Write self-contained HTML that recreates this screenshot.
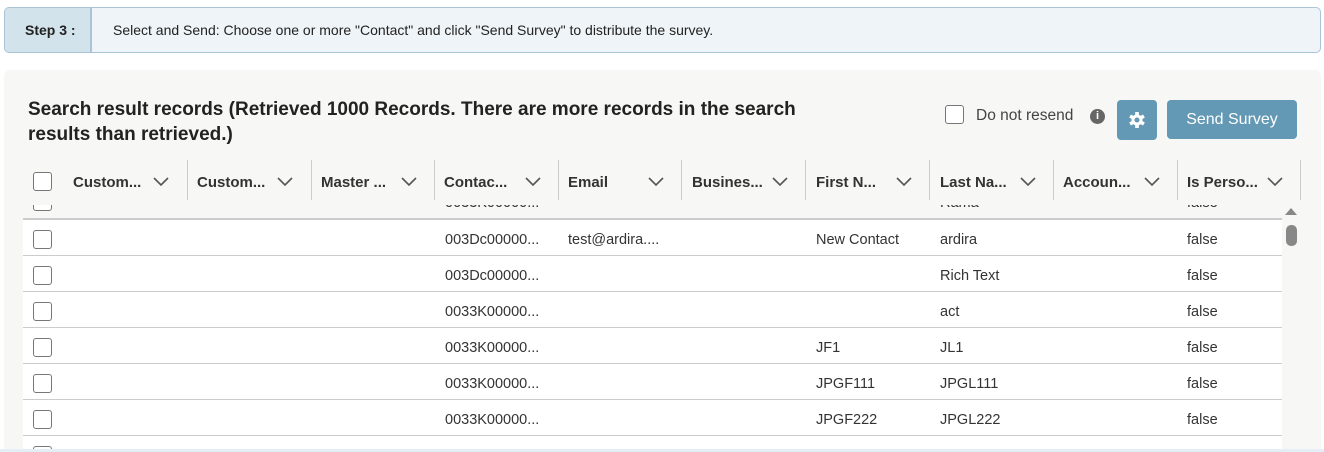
<!DOCTYPE html>
<html><head><style>
*{box-sizing:border-box;margin:0;padding:0}
html,body{width:1324px;height:452px;overflow:hidden}
body{background:#fff;font-family:"Liberation Sans",sans-serif;color:#333;position:relative}
.step{position:absolute;left:4px;top:7px;width:1317px;height:46px;border:1px solid #a9c4d4;border-radius:5px;background:#eef4f8;overflow:hidden}
.step .lab{position:absolute;left:0;top:0;width:87px;height:100%;background:#d3e3ec;border-right:2px solid #a9c4d4;font-size:14px;font-weight:bold;line-height:44px;padding-left:20px;color:#222}
.step .txt{position:absolute;left:108px;top:0;line-height:44px;font-size:14px;color:#222}
.panel{position:absolute;left:4px;top:70px;width:1317px;height:390px;background:#f7f7f6;border-radius:6px}
.title{position:absolute;left:28px;top:97px;font-size:19px;font-weight:bold;line-height:25px;color:#222;width:820px}
.cb{position:absolute;width:19px;height:19px;border:1px solid #777;border-radius:3px;background:#fff}
.hdr{position:absolute;top:160px;height:45px;font-size:15px;font-weight:bold;color:#333}
.hc{position:absolute;top:1px;height:45px;line-height:44px;padding-left:11px}
.div{position:absolute;top:0;width:1px;height:40px;background:#ccc}
.rows{position:absolute;left:23px;top:205px;width:1259px;height:247px;overflow:hidden}
.row{position:absolute;left:0;width:1259px;height:36px;background:#fff;border-bottom:1px solid #ccc;font-size:14.5px;color:#333}
.row span{position:absolute;top:3px;line-height:35px}
.btn{position:absolute;background:#6399b4;border-radius:4px;color:#fff}
</style></head><body>
<div class="step"><div class="lab">Step 3 :</div><div class="txt">Select and Send: Choose one or more "Contact" and click "Send Survey" to distribute the survey.</div></div>
<div class="panel"></div>
<div class="title">Search result records (Retrieved 1000 Records. There are more records in the search results than retrieved.)</div>
<div class="cb" style="left:945px;top:105px"></div>
<div style="position:absolute;left:976px;top:107px;font-size:15.5px;color:#444">Do not resend</div>
<div style="position:absolute;left:1090px;top:109px;width:15px;height:15px;border-radius:50%;background:#666;color:#fff;font-size:11px;font-weight:bold;text-align:center;line-height:15px">i</div>
<div class="btn" style="left:1117px;top:100px;width:40px;height:40px"><svg width="40" height="40" viewBox="0 0 40 40"><g transform="translate(20,20)" fill="#fff"><circle r="5.5"/><g id="t"><rect x="-1.8" y="-8" width="3.6" height="4"/></g><use href="#t" transform="rotate(60)"/><use href="#t" transform="rotate(120)"/><use href="#t" transform="rotate(180)"/><use href="#t" transform="rotate(240)"/><use href="#t" transform="rotate(300)"/><circle r="2.5" fill="#6399b4"/></g></svg></div>
<div class="btn" style="left:1167px;top:100px;width:130px;height:39px;font-size:16px;text-align:center;line-height:40px">Send Survey</div>

<div class="hdr" style="left:0;width:1324px">
<div class="cb" style="left:33px;top:12px"></div>
<div class="hc" style="left:62px">Custom...</div><svg style="position:absolute;left:153px;top:17px" width="16" height="10"><path d="M1 1l7 7 7-7" stroke="#555" stroke-width="1.6" fill="none"/></svg>
<div class="div" style="left:187px"></div>
<div class="hc" style="left:186px">Custom...</div><svg style="position:absolute;left:277px;top:17px" width="16" height="10"><path d="M1 1l7 7 7-7" stroke="#555" stroke-width="1.6" fill="none"/></svg>
<div class="div" style="left:311px"></div>
<div class="hc" style="left:310px">Master ...</div><svg style="position:absolute;left:401px;top:17px" width="16" height="10"><path d="M1 1l7 7 7-7" stroke="#555" stroke-width="1.6" fill="none"/></svg>
<div class="div" style="left:434px"></div>
<div class="hc" style="left:433px">Contac...</div><svg style="position:absolute;left:525px;top:17px" width="16" height="10"><path d="M1 1l7 7 7-7" stroke="#555" stroke-width="1.6" fill="none"/></svg>
<div class="div" style="left:558px"></div>
<div class="hc" style="left:557px">Email</div><svg style="position:absolute;left:648px;top:17px" width="16" height="10"><path d="M1 1l7 7 7-7" stroke="#555" stroke-width="1.6" fill="none"/></svg>
<div class="div" style="left:681px"></div>
<div class="hc" style="left:681px">Busines...</div><svg style="position:absolute;left:772px;top:17px" width="16" height="10"><path d="M1 1l7 7 7-7" stroke="#555" stroke-width="1.6" fill="none"/></svg>
<div class="div" style="left:805px"></div>
<div class="hc" style="left:805px">First N...</div><svg style="position:absolute;left:896px;top:17px" width="16" height="10"><path d="M1 1l7 7 7-7" stroke="#555" stroke-width="1.6" fill="none"/></svg>
<div class="div" style="left:929px"></div>
<div class="hc" style="left:929px">Last Na...</div><svg style="position:absolute;left:1020px;top:17px" width="16" height="10"><path d="M1 1l7 7 7-7" stroke="#555" stroke-width="1.6" fill="none"/></svg>
<div class="div" style="left:1053px"></div>
<div class="hc" style="left:1052px">Accoun...</div><svg style="position:absolute;left:1144px;top:17px" width="16" height="10"><path d="M1 1l7 7 7-7" stroke="#555" stroke-width="1.6" fill="none"/></svg>
<div class="div" style="left:1177px"></div>
<div class="hc" style="left:1176px">Is Perso...</div><svg style="position:absolute;left:1267px;top:17px" width="16" height="10"><path d="M1 1l7 7 7-7" stroke="#555" stroke-width="1.6" fill="none"/></svg>
<div class="div" style="left:1300px"></div>
</div>

<div class="rows">
<div class="row" style="top:-21px;height:36px;border-bottom:2px solid #ccc;background:#f7f7f6"><div class="cb" style="left:10px;top:8px"></div><span style="left:422px;top:2px">0033K00000...</span><span style="left:917px;top:2px">Rama</span><span style="left:1164px;top:2px">false</span></div>
<div class="row" style="top:15px"><div class="cb" style="left:10px;top:10px"></div><span style="left:422px">003Dc00000...</span><span style="left:545px">test@ardira....</span><span style="left:793px">New Contact</span><span style="left:917px">ardira</span><span style="left:1164px">false</span></div>
<div class="row" style="top:51px"><div class="cb" style="left:10px;top:10px"></div><span style="left:422px">003Dc00000...</span><span style="left:917px">Rich Text</span><span style="left:1164px">false</span></div>
<div class="row" style="top:87px"><div class="cb" style="left:10px;top:10px"></div><span style="left:422px">0033K00000...</span><span style="left:917px">act</span><span style="left:1164px">false</span></div>
<div class="row" style="top:123px"><div class="cb" style="left:10px;top:10px"></div><span style="left:422px">0033K00000...</span><span style="left:793px">JF1</span><span style="left:917px">JL1</span><span style="left:1164px">false</span></div>
<div class="row" style="top:159px"><div class="cb" style="left:10px;top:10px"></div><span style="left:422px">0033K00000...</span><span style="left:793px">JPGF111</span><span style="left:917px">JPGL111</span><span style="left:1164px">false</span></div>
<div class="row" style="top:195px"><div class="cb" style="left:10px;top:10px"></div><span style="left:422px">0033K00000...</span><span style="left:793px">JPGF222</span><span style="left:917px">JPGL222</span><span style="left:1164px">false</span></div>
<div class="row" style="top:231px"><div class="cb" style="left:10px;top:10px"></div><span style="left:422px">0033K00000...</span><span style="left:793px">JLL</span><span style="left:917px">JLL</span><span style="left:1164px">false</span></div>
</div>
<svg style="position:absolute;left:1284px;top:206px" width="14" height="10"><path d="M1 9L7 2l6 7z" fill="#888"/></svg>
<div style="position:absolute;left:1286px;top:225px;width:11px;height:21px;border-radius:5px;background:#888"></div>
<div style="position:absolute;left:0;top:449px;width:1324px;height:3px;background:#e4eef4"></div>
</body></html>
